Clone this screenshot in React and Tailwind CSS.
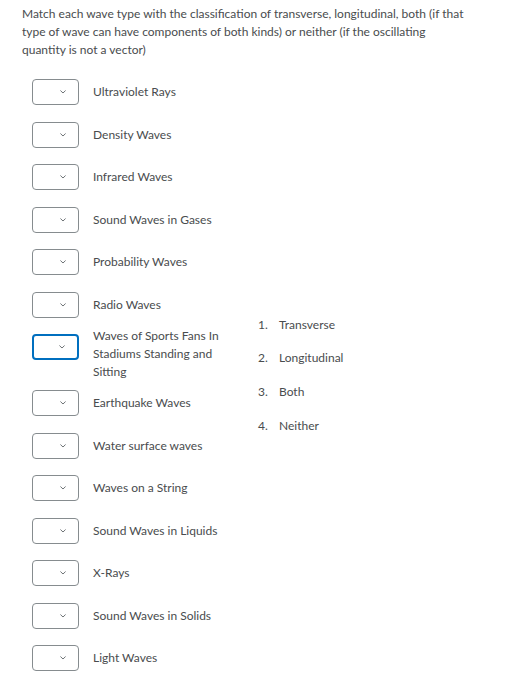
import { useState } from "react";

const waves = [
  "Ultraviolet Rays",
  "Density Waves",
  "Infrared Waves",
  "Sound Waves in Gases",
  "Probability Waves",
  "Radio Waves",
  "Waves of Sports Fans In Stadiums Standing and Sitting",
  "Earthquake Waves",
  "Water surface waves",
  "Waves on a String",
  "Sound Waves in Liquids",
  "X-Rays",
  "Sound Waves in Solids",
  "Light Waves",
];

const choices = ["Transverse", "Longitudinal", "Both", "Neither"];

function Chevron() {
  return (
    <svg width="6" height="4" viewBox="0 0 6 4" className="text-[#6e7376]">
      <path d="M0.7 0.8 L3 3 L5.3 0.8" fill="none" stroke="currentColor" strokeWidth="1" strokeLinecap="round" />
    </svg>
  );
}

function Picker({ focused, onFocus }) {
  return (
    <button
      onClick={onFocus}
      className={`self-start mt-[8px] w-[47px] h-[26px] rounded-[4px] bg-white flex items-center justify-end pr-[12px] ${
        focused ? "border-2 border-[#006fbf]" : "border border-[#868c8f]"
      }`}
    >
      <Chevron />
    </button>
  );
}

export default function App() {
  const [focused, setFocused] = useState(6);

  return (
    <div className="bg-white min-h-[680px] text-[#494c4e] text-[12px] leading-[18px] font-['Lato','Liberation_Sans',sans-serif]">
      <p className="pl-[22px] pr-[63px] pt-[5px]">
        Match each wave type with the classification of transverse, longitudinal, both (if that type of wave can have
        components of both kinds) or neither (if the oscillating quantity is not a vector)
      </p>

      <div className="flex items-center mt-[12px] pl-[32px]">
        <div className="flex flex-col">
          {waves.map((w, i) => (
            <div key={w} className="flex items-center min-h-[42.5px]">
              <Picker focused={focused === i} onFocus={() => setFocused(i)} />
              <span className="ml-[14px] w-[140px] py-px">{w}</span>
            </div>
          ))}
        </div>

        <ol className="ml-[25px] flex flex-col gap-[15.7px]">
          {choices.map((c, i) => (
            <li key={c} className="flex">
              <span className="w-[21px]">{i + 1}.</span>
              <span>{c}</span>
            </li>
          ))}
        </ol>
      </div>
    </div>
  );
}
